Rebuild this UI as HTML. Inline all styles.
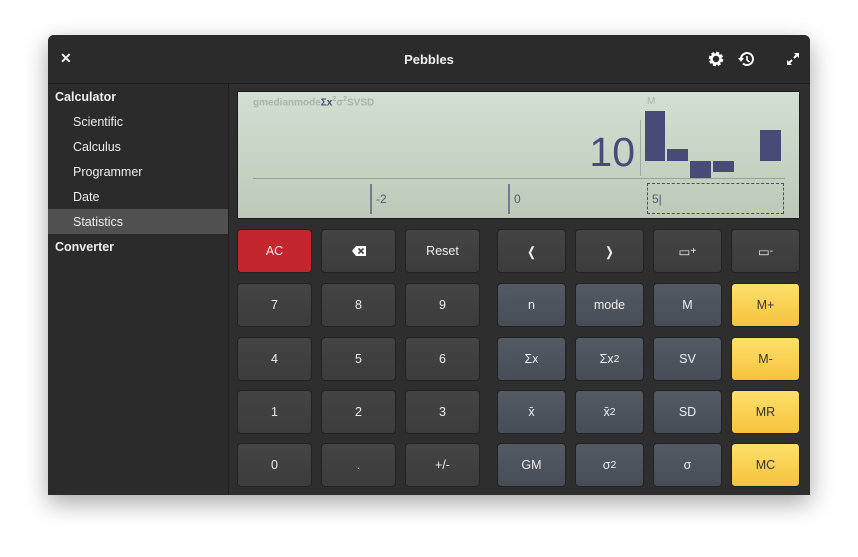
<!DOCTYPE html><html><head><style>
body{margin:0;width:858px;height:557px;background:#fff;font-family:"Liberation Sans",sans-serif;position:relative;overflow:hidden}
.win{position:absolute;left:48px;top:35px;width:762px;height:460px;background:#2e2e2e;border-radius:6px 6px 0 0;box-shadow:0 8px 24px rgba(0,0,0,.35);overflow:hidden}
.tb{position:absolute;left:0;top:0;width:762px;height:48px;background:#2b2b2b;border-bottom:1px solid #1e1e1e;color:#eee}
.side{position:absolute;left:0;top:49px;width:180px;height:411px;background:#2b2b2b;border-right:1px solid #1e1e1e;color:#eee;font-size:12.5px;padding-top:0px}
.side div{height:25px;line-height:27px;padding-left:25px}
.side .h{font-weight:bold;padding-left:7px}
.side .sel{background:#505050}
.b{position:absolute;border-radius:4px;color:#eee;font-size:12.5px;text-align:center;box-sizing:border-box;border:1px solid #222;display:flex;align-items:center;justify-content:center}
.g{background:linear-gradient(#444,#3c3c3c)}
.s{background:linear-gradient(#535a63,#474d56)}
.y{background:linear-gradient(#fde06a,#f6c33e);color:#333}
.r{background:#c4262e}
.disp{position:absolute;left:189px;top:56px;width:563px;height:128px;background:linear-gradient(#d3dfd2,#bdc9b8);border:1px solid #1b1b1b;box-sizing:border-box}
.bar{position:absolute;background:#484a77}
</style></head><body>
<div class="win">
<div class="tb">
<div style="position:absolute;left:12px;top:15px;font-size:14px;font-weight:bold">✕</div>
<div style="position:absolute;left:0;width:762px;top:17px;text-align:center;font-size:13px;font-weight:bold">Pebbles</div>
<svg style="position:absolute;left:659px;top:15px" width="18" height="18" viewBox="0 0 18 18"><circle cx="9" cy="9" r="5.5" fill="none" stroke="#fff" stroke-width="3.5" stroke-dasharray="2.7 1.6"/><circle cx="9" cy="9" r="4.5" fill="none" stroke="#fff" stroke-width="2.5"/></svg>
<svg style="position:absolute;left:689px;top:15px" width="18" height="18" viewBox="0 0 18 18"><path d="M4 9a6 6 0 1 1 2 4.5" fill="none" stroke="#fff" stroke-width="2"/><path d="M1 8h6l-3 4z" fill="#fff"/><path d="M10 6v4l2.5 2" fill="none" stroke="#fff" stroke-width="1.6"/></svg>
<svg style="position:absolute;left:737px;top:16px" width="16" height="16" viewBox="0 0 16 16"><path d="M9 2h5v5zM7 14H2V9z" fill="#fff"/><path d="M12 4L9 7M4 12l3-3" stroke="#fff" stroke-width="2"/></svg>
</div>
<div class="side">
<div class="h">Calculator</div><div>Scientific</div><div>Calculus</div><div>Programmer</div><div>Date</div><div class="sel">Statistics</div><div class="h">Converter</div>
</div>
<div class="disp">
<div style="position:absolute;left:15px;top:4px;font-size:10px;color:#aab4aa;font-weight:bold">gmedianmode<span style="color:#484a77">Σx</span><sup style="font-size:7px">2</sup>σ<sup style="font-size:7px">2</sup>SVSD</div>
<div style="position:absolute;left:409px;top:4px;font-size:10px;color:#aab4aa">M</div>
<div style="position:absolute;right:164px;top:37px;font-size:41px;color:#484a77">10</div>
<div style="position:absolute;left:402px;top:28px;width:1px;height:56px;background:#a0aa9f"></div>
<div class="bar" style="left:407px;top:19px;width:20px;height:50px"></div>
<div class="bar" style="left:429px;top:57px;width:21px;height:12px"></div>
<div class="bar" style="left:452px;top:69px;width:21px;height:17px"></div>
<div class="bar" style="left:475px;top:69px;width:21px;height:11px"></div>
<div class="bar" style="left:522px;top:38px;width:21px;height:31px"></div>
<div style="position:absolute;left:15px;top:86px;width:532px;height:1px;background:#9aa59a"></div>
<div style="position:absolute;left:132px;top:92px;width:2px;height:30px;background:#777b90"></div>
<div style="position:absolute;left:138px;top:100px;font-size:12px;color:#555a70">-2</div>
<div style="position:absolute;left:270px;top:92px;width:2px;height:30px;background:#777b90"></div>
<div style="position:absolute;left:276px;top:100px;font-size:12px;color:#555a70">0</div>
<div style="position:absolute;left:409px;top:91px;width:137px;height:31px;border:1px dashed #484a77;box-sizing:border-box"></div>
<div style="position:absolute;left:414px;top:100px;font-size:12px;color:#555a70">5|</div>
</div>
</div>
<div id="btns"></div>
<script>
var rows=[229,283,337,390,443],cols=[237,321,405],cols2=[497,575,653,731];
var bk='<svg width="14" height="10" viewBox="0 0 14 10"><path d="M4 0h10v10H4L0 5z" fill="#fff"/><path d="M6.5 2.5l5 5M11.5 2.5l-5 5" stroke="#3f3f3f" stroke-width="1.6"/></svg>';
var L=[["AC","r"],[bk,"g"],["Reset","g"],["7","g"],["8","g"],["9","g"],["4","g"],["5","g"],["6","g"],["1","g"],["2","g"],["3","g"],["0","g"],[".","g"],["+/-","g"]];
var R=[["<b>❬</b>","g"],["<b>❭</b>","g"],["▭<sup>+</sup>","g"],["▭<sup>-</sup>","g"],["n","s"],["mode","s"],["M","s"],["M+","y"],["Σx","s"],["Σx<sup>2</sup>","s"],["SV","s"],["M-","y"],["x̄","s"],["x̄<sup>2</sup>","s"],["SD","s"],["MR","y"],["GM","s"],["σ<sup>2</sup>","s"],["σ","s"],["MC","y"]];
var h="";
L.forEach(function(b,i){h+='<div class="b '+b[1]+'" style="left:'+cols[i%3]+'px;top:'+rows[Math.floor(i/3)]+'px;width:75px;height:44px">'+b[0]+'</div>'});
R.forEach(function(b,i){h+='<div class="b '+b[1]+'" style="left:'+cols2[i%4]+'px;top:'+rows[Math.floor(i/4)]+'px;width:69px;height:44px">'+b[0]+'</div>'});
document.getElementById("btns").innerHTML=h;
</script>
</body></html>
